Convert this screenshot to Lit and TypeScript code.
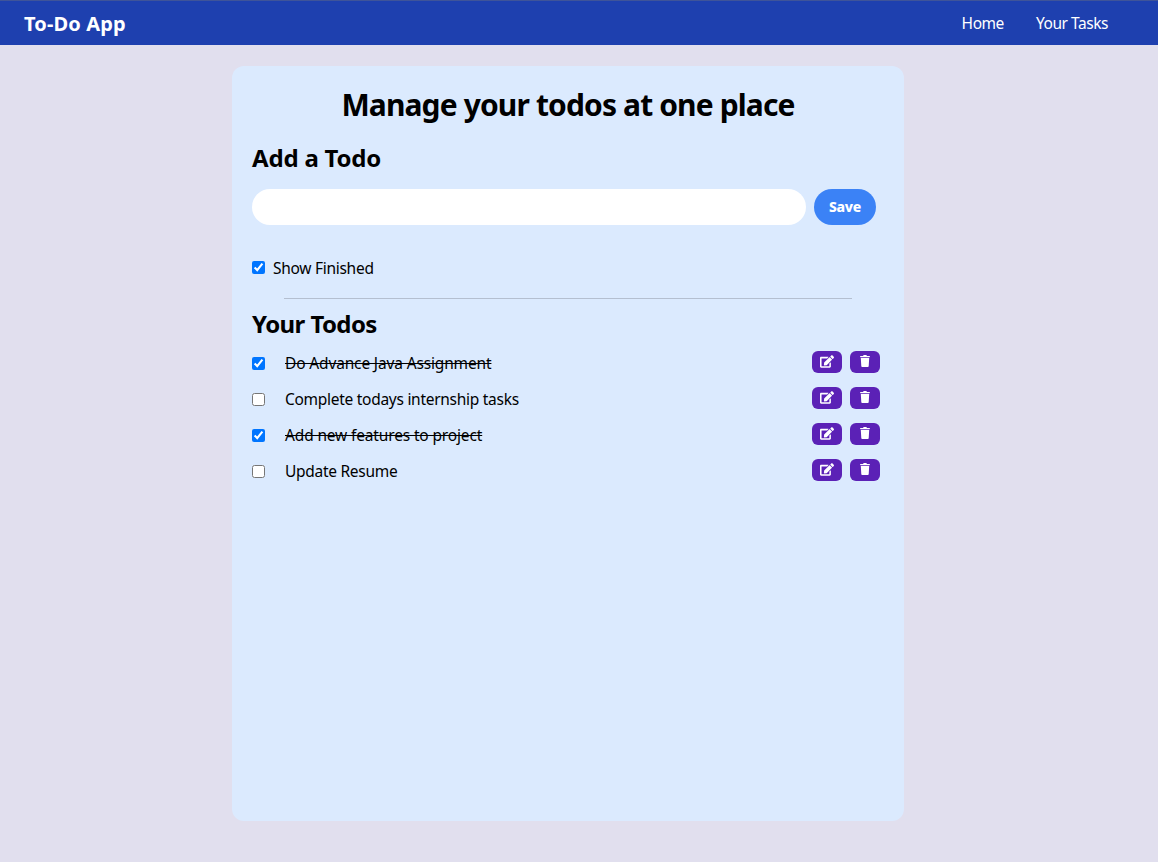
import { LitElement, html, css } from "lit";
import { customElement } from "lit/decorators.js";

const todos = [
  { text: "Do Advance Java Assignment", done: true },
  { text: "Complete todays internship tasks", done: false },
  { text: "Add new features to project", done: true },
  { text: "Update Resume", done: false },
];

@customElement("app-root")
export class AppRoot extends LitElement {
  static styles = css`
    :host { display: block; min-height: 862px; background: #e1dfee; font-family: "Noto Sans", "Open Sans", sans-serif; color: #000; }
    * { box-sizing: border-box; }
    nav { height: 45px; background: #1e40af; border-top: 1px solid #3f5499; color: #fff; display: flex; align-items: center; justify-content: space-between; padding: 0 50px 0 24px; }
    .brand { font-size: 20px; font-weight: 700; letter-spacing: 0.15px; }
    .links { display: flex; gap: 32px; font-size: 15.5px; letter-spacing: -0.45px; }
    .wrap { display: flex; justify-content: center; padding: 21px 22px 0 0; }
    .card { width: 672px; height: 755px; background: #dbeafe; border-radius: 12px; padding: 20px; }
    h1 { margin: 1px 0 0; font-size: 30px; line-height: 36px; font-weight: 700; text-align: center; letter-spacing: -0.87px; }
    h2 { margin: 0; font-size: 24px; line-height: 32px; font-weight: 700; }
    .add-title { margin-top: 19px; letter-spacing: -0.2px; }
    .add { display: flex; gap: 8px; margin-top: 15px; width: 624px; }
    .add input { width: 554px; height: 36px; border: 0; border-radius: 18px; background: #fff; padding: 4px 20px; }
    .save { width: 62px; height: 36px; border: 0; padding: 0 0 1px; border-radius: 18px; background: #3b82f6; color: #fff; font-family: "Noto Sans", sans-serif; font-size: 14px; font-weight: 800; letter-spacing: -0.3px; }
    .show { display: flex; align-items: center; margin-top: 31px; height: 24px; font-size: 15.5px; letter-spacing: -0.28px; }
    input[type="checkbox"] { margin: 0; width: 13px; height: 13px; flex: none; accent-color: #0075ff; }
    .show input { margin: -1px 8px 0 0; }
    hr { width: 568px; margin: 18px auto 0; border: 0; border-top: 1px solid #b4bfd0; }
    .todos-title { margin-top: 9px; letter-spacing: -0.6px; }
    .list { margin-top: 5px; display: flex; flex-direction: column; }
    .row { display: flex; align-items: center; justify-content: space-between; height: 36px; }
    .left { display: flex; align-items: center; gap: 20px; font-size: 15.5px; letter-spacing: -0.28px; }
    .left span { margin-top: -1px; }
    .left .done { text-decoration: line-through; letter-spacing: -0.15px; }
    .actions { display: flex; gap: 8px; height: 22px; padding-right: 4px; margin-top: -2px; }
    .actions button { width: 30px; height: 22px; border: 0; padding: 0 0 2px; border-radius: 6px; background: #5b21b6; display: flex; align-items: center; justify-content: center; }
    svg { display: block; fill: #fff; }
  `;

  render() {
    return html`
      <nav>
        <span class="brand">To-Do App</span>
        <div class="links"><span>Home</span><span>Your Tasks</span></div>
      </nav>
      <div class="wrap">
        <main class="card">
          <h1>Manage your todos at one place</h1>
          <h2 class="add-title">Add a Todo</h2>
          <div class="add"><input type="text" /><button class="save">Save</button></div>
          <label class="show"><input type="checkbox" checked />Show Finished</label>
          <hr />
          <h2 class="todos-title">Your Todos</h2>
          <div class="list">
            ${todos.map(
              (t) => html`
                <div class="row">
                  <div class="left">
                    <input type="checkbox" .checked=${t.done} />
                    <span class=${t.done ? "done" : ""}>${t.text}</span>
                  </div>
                  <div class="actions">
                    <button aria-label="Edit">
                      <svg width="14" height="13" viewBox="0 0 576 512"><path d="M402.6 83.2l90.2 90.2c3.8 3.8 3.8 10 0 13.8L274.4 405.6l-92.8 10.3c-12.4 1.4-22.9-9.1-21.5-21.5l10.3-92.8L388.8 83.2c3.8-3.8 10-3.8 13.8 0zm162-22.9l-48.8-48.8c-15.2-15.2-39.9-15.2-55.2 0l-35.4 35.4c-3.8 3.8-3.8 10 0 13.8l90.2 90.2c3.8 3.8 10 3.8 13.8 0l35.4-35.4c15.2-15.3 15.2-40 0-55.2zM384 346.2V448H64V128h229.8c3.2 0 6.2-1.3 8.5-3.5l40-40c7.6-7.6 2.2-20.5-8.5-20.5H48C21.5 64 0 85.5 0 112v352c0 26.5 21.5 48 48 48h352c26.5 0 48-21.5 48-48V306.2c0-10.7-12.9-16-20.5-8.5l-40 40c-2.2 2.3-3.5 5.3-3.5 8.5z"/></svg>
                    </button>
                    <button aria-label="Delete">
                      <svg width="10" height="12" viewBox="0 0 10 12"><path d="M3.6 0h2.8l.5 1H9.3c.4 0 .7.3.7.6s-.3.7-.7.7H.7C.3 2.3 0 2 0 1.6s.3-.6.7-.6H3.1zM.8 3h8.4l-.5 8.2c0 .5-.4.8-.9.8H2.2c-.5 0-.9-.3-.9-.8z"/></svg>
                    </button>
                  </div>
                </div>
              `
            )}
          </div>
        </main>
      </div>
    `;
  }
}
